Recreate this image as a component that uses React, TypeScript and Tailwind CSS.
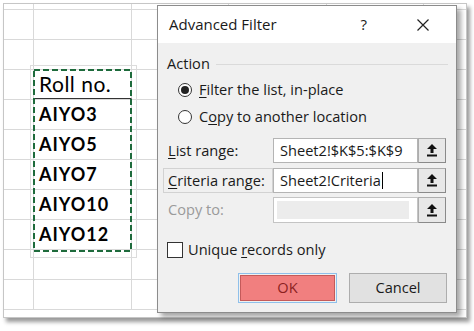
import React from "react";

const cols = [30, 98, 97, 98, 97, 50];
const cellText: Record<number, { t: string; bold?: boolean }> = {
  3: { t: "Roll no." },
  4: { t: "AIYO3", bold: true },
  5: { t: "AIYO5", bold: true },
  6: { t: "AIYO7", bold: true },
  7: { t: "AIYO10", bold: true },
  8: { t: "AIYO12", bold: true },
};

function RangeIcon() {
  return (
    <svg width="10" height="13" viewBox="0 0 10 13">
      <path d="M5 0 L10 5 L6.5 5 L6.5 9 L3.5 9 L3.5 5 L0 5 Z" fill="#111" />
      <rect x="0" y="10.5" width="10" height="2" fill="#111" />
    </svg>
  );
}

function RangeButton() {
  return (
    <div className="flex h-full w-[28px] items-center justify-center border border-[#adadad] border-b-[#8a8a8a] border-r-[#8a8a8a] bg-[#e8e8e8]">
      <RangeIcon />
    </div>
  );
}

function Radio({ checked }: { checked?: boolean }) {
  return (
    <div className="flex h-[14px] w-[14px] items-center justify-center rounded-full border border-[#333] bg-white">
      {checked && <div className="h-[8px] w-[8px] rounded-full bg-[#222]" />}
    </div>
  );
}

export default function App() {
  const rows = Array.from({ length: 10 }, (_, i) => i);
  return (
    <div className="relative h-[331px] w-[474px] overflow-hidden bg-white" style={{ fontFamily: "'Open Sans', 'Noto Sans', sans-serif" }}>
      <div className="pl-[3px] pt-[3px]">
        <div className="h-[315px] w-[464px] overflow-hidden border border-[#c6c6c6] bg-white shadow-[3px_4px_4px_rgba(0,0,0,0.4)]">
          <div className="flex h-[6px] border-b border-[#d9d9d9]">
            {cols.map((w, c) => (
              <div key={c} className="h-full shrink-0 border-r border-[#d9d9d9]" style={{ width: w }} />
            ))}
          </div>
          {rows.map((r) => (
            <div key={r} className="flex h-[30px] border-b border-[#d9d9d9]">
              {cols.map((w, c) => {
                const ct = c === 1 ? cellText[r + 1] : undefined;
                return (
                  <div
                    key={c}
                    className={`flex h-full shrink-0 items-center border-r border-[#d9d9d9] pl-[5px] text-black ${c === 1 && r === 2 ? "border-b border-b-[#333]" : ""}`}
                    style={{ width: w, fontFamily: "Lato, 'Liberation Sans', sans-serif" }}
                  >
                    {ct ? (
                      ct.bold ? (
                        <span className="text-[18px] font-bold tracking-[1px]">{ct.t}</span>
                      ) : (
                        <span className="text-[21px] tracking-[0.5px]">{ct.t}</span>
                      )
                    ) : null}
                  </div>
                );
              })}
            </div>
          ))}
        </div>
      </div>

      {/* selection outline */}
      <div className="absolute left-[30px] top-[65px] h-[193px] w-[107px] border border-[#dcdcdc]" />
      <svg className="absolute left-[33px] top-[69px]" width="99" height="183">
        <rect x="1" y="1" width="97" height="181" fill="none" stroke="#1e6b3c" strokeWidth="2" strokeDasharray="6 3" />
      </svg>

      {/* dialog */}
      <div className="absolute left-[157px] top-[5px] flex h-[308px] w-[300px] flex-col border border-[#8c8c8c] bg-[#f0f0f0] text-[14.6px] text-[#1a1a1a] shadow-[4px_4px_5px_rgba(0,0,0,0.35)]">
        <div className="flex h-[37px] shrink-0 items-center bg-white pl-[11px] text-[15px]">
          <span>Advanced Filter</span>
          <span className="ml-[84px]">?</span>
          <svg className="ml-[50px]" width="12" height="12" viewBox="0 0 12 12">
            <path d="M0.5 0.5 L11.5 11.5 M11.5 0.5 L0.5 11.5" stroke="#222" strokeWidth="1.2" />
          </svg>
        </div>
        <div className="flex flex-col pt-[11px]">
          <div className="flex h-[20px] items-center pl-[9px] pr-[8px]">
            <span>Action</span>
            <div className="ml-[6px] h-px flex-1 bg-[#dadada]" />
          </div>
          <div className="mt-[6px] flex h-[20px] items-center gap-[7px] pl-[20px]">
            <Radio checked />
            <span><span className="underline underline-offset-2">F</span>ilter the list, in-place</span>
          </div>
          <div className="mt-[7px] flex h-[20px] items-center gap-[7px] pl-[20px]">
            <Radio />
            <span>C<span className="underline underline-offset-2">o</span>py to another location</span>
          </div>

          <div className="mt-[11px] flex h-[25px] items-stretch pl-[5px]">
            <div className="flex w-[110px] items-center border border-transparent pl-[4px]">
              <span><span className="underline underline-offset-2">L</span>ist range:</span>
            </div>
            <div className="flex w-[145px] items-center border border-[#b4b4b4] bg-white pl-[6px]">Sheet2!$K$5:$K$9</div>
            <RangeButton />
          </div>
          <div className="mt-[5px] flex h-[25px] items-stretch pl-[5px]">
            <div className="flex w-[110px] items-center border border-[#d2d2d2] pl-[4px]">
              <span><span className="underline underline-offset-2">C</span>riteria range:</span>
            </div>
            <div className="flex w-[145px] items-center border border-[#b4b4b4] bg-white pl-[6px]">
              Sheet2!Criteria<span className="ml-px h-[17px] w-px bg-black" />
            </div>
            <RangeButton />
          </div>
          <div className="mt-[4px] flex h-[26px] items-stretch pl-[5px]">
            <div className="flex w-[110px] items-center border border-transparent pl-[4px] text-[#9a9a9a]">
              <span>Copy to:</span>
            </div>
            <div className="flex w-[145px] items-stretch border border-[#c4c4c4] bg-white p-[3px] pr-[8px]">
              <div className="flex-1 bg-[#ececec]" />
            </div>
            <RangeButton />
          </div>

          <div className="mt-[19px] flex h-[16px] items-center gap-[5px] pl-[9px]">
            <div className="h-[16px] w-[16px] border border-[#333] bg-white" />
            <span>Unique <span className="underline underline-offset-2">r</span>ecords only</span>
          </div>

          <div className="mt-[15px] flex justify-end gap-[12px] pr-[9px]">
            <div className="flex h-[30px] w-[99px] border border-[#8fc0ea] p-px">
              <div className="flex flex-1 items-center justify-center border border-[#c45a5a] bg-[#f17f7f] text-[#8c1f1f]">OK</div>
            </div>
            <div className="flex h-[30px] w-[98px] items-center justify-center border border-[#adadad] bg-[#e1e1e1]">Cancel</div>
          </div>
        </div>
      </div>
    </div>
  );
}
